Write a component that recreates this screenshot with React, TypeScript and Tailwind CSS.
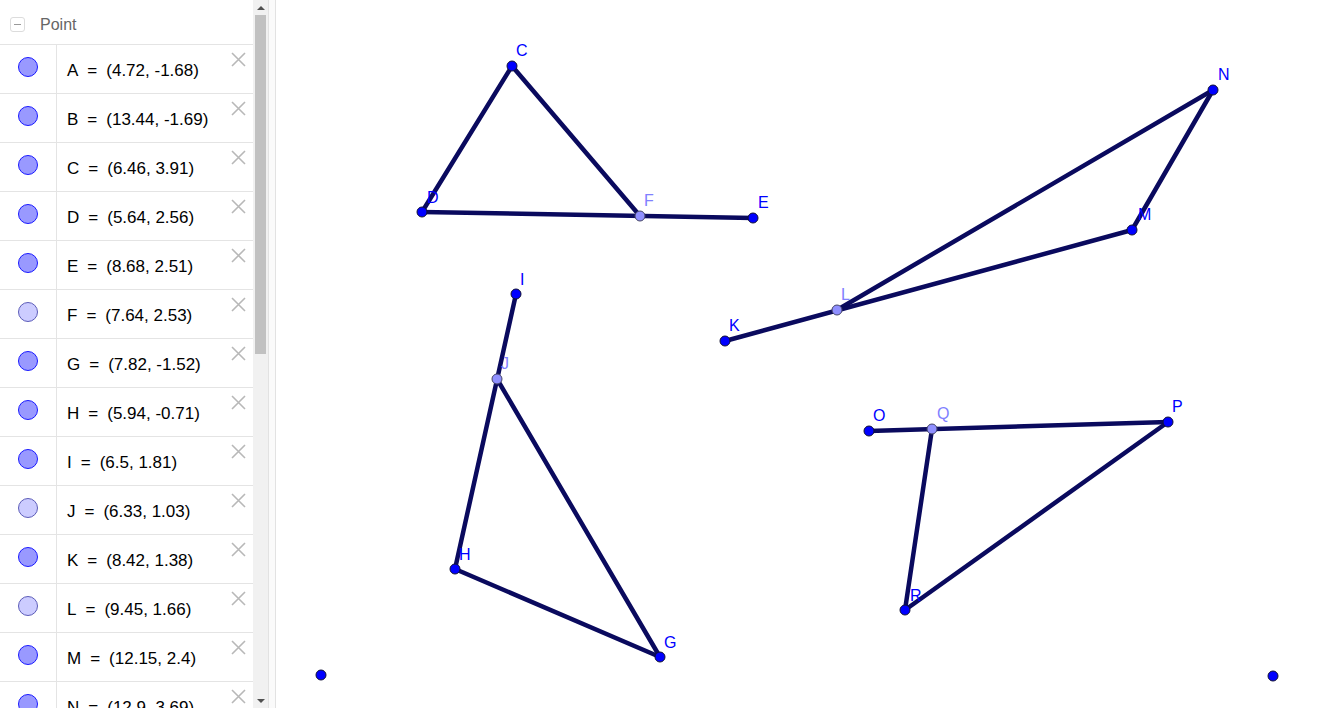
import React from "react";

interface PointRow {
  name: string;
  value: string;
  dependent?: boolean;
}

const rows: PointRow[] = [
  { name: "A", value: "(4.72, -1.68)" },
  { name: "B", value: "(13.44, -1.69)" },
  { name: "C", value: "(6.46, 3.91)" },
  { name: "D", value: "(5.64, 2.56)" },
  { name: "E", value: "(8.68, 2.51)" },
  { name: "F", value: "(7.64, 2.53)", dependent: true },
  { name: "G", value: "(7.82, -1.52)" },
  { name: "H", value: "(5.94, -0.71)" },
  { name: "I", value: "(6.5, 1.81)" },
  { name: "J", value: "(6.33, 1.03)", dependent: true },
  { name: "K", value: "(8.42, 1.38)" },
  { name: "L", value: "(9.45, 1.66)", dependent: true },
  { name: "M", value: "(12.15, 2.4)" },
  { name: "N", value: "(12.9, 3.69)" },
];

// canvas points, page coordinates
const pts: Record<string, { x: number; y: number; lx: number; ly: number; dep?: boolean; label?: boolean }> = {
  A: { x: 321, y: 675, lx: 0, ly: 0, label: false },
  B: { x: 1273, y: 676, lx: 0, ly: 0, label: false },
  C: { x: 512, y: 66, lx: 516, ly: 56 },
  D: { x: 422, y: 212, lx: 427, ly: 203 },
  E: { x: 753, y: 218, lx: 758, ly: 208 },
  F: { x: 640, y: 216, lx: 644, ly: 206, dep: true },
  G: { x: 660, y: 657, lx: 664, ly: 648 },
  H: { x: 455, y: 569, lx: 459, ly: 560 },
  I: { x: 516, y: 294, lx: 520, ly: 285 },
  J: { x: 497, y: 379, lx: 501, ly: 369, dep: true },
  K: { x: 725, y: 341, lx: 729, ly: 331 },
  L: { x: 837, y: 310, lx: 841, ly: 300, dep: true },
  M: { x: 1132, y: 230, lx: 1138, ly: 220 },
  N: { x: 1213, y: 90, lx: 1218, ly: 80 },
  O: { x: 869, y: 431, lx: 873, ly: 421 },
  P: { x: 1168, y: 422, lx: 1172, ly: 412 },
  Q: { x: 932, y: 429, lx: 937, ly: 419, dep: true },
  R: { x: 905, y: 610, lx: 910, ly: 601 },
};

const segments: [string, string][] = [
  ["C", "D"], ["C", "F"], ["D", "E"],
  ["N", "M"], ["N", "L"], ["K", "M"],
  ["I", "H"], ["J", "G"], ["H", "G"],
  ["O", "P"], ["Q", "R"], ["R", "P"],
];

function Row({ row }: { row: PointRow }): React.ReactElement {
  return (
    <div className="flex h-[49px] border-b border-[#e4e4e4]">
      <div className="w-[57px] border-r border-[#e4e4e4] flex justify-center">
        <div
          className={
            row.dependent
              ? "mt-[12px] w-[20px] h-[20px] rounded-full bg-[#ccccff] border border-[#5c5cb8]"
              : "mt-[12px] w-[20px] h-[20px] rounded-full bg-[#9999ff] border border-[#1a1aff]"
          }
        />
      </div>
      <div className="relative flex-1 pl-[10px] pt-[15px] text-[17px] leading-[22px] text-black whitespace-nowrap">
        {row.name}
        <span className="mx-[9px]">=</span>
        {row.value}
        <svg className="absolute right-[7px] top-[7px]" width="15" height="15" viewBox="0 0 15 15">
          <path d="M1 1 L14 14 M14 1 L1 14" stroke="#b8b8b8" strokeWidth="1.6" fill="none" />
        </svg>
      </div>
    </div>
  );
}

export default function App(): React.ReactElement {
  return (
    <div className="flex h-[708px] w-full overflow-hidden bg-white" style={{ fontFamily: '"Liberation Sans", Arial, sans-serif' }}>
      {/* Algebra view */}
      <div className="w-[253px] shrink-0 overflow-hidden">
        <div className="flex items-center h-[45px] border-b border-[#e4e4e4] pl-[10px] pt-[5px] gap-[15px]">
          <div className="w-[15px] h-[15px] rounded-[3px] border border-[#dcdcdc] flex items-center justify-center">
            <div className="w-[7px] h-[1.5px] bg-[#9a9a9a]" />
          </div>
          <span className="text-[16px] text-[#666666]">Point</span>
        </div>
        {rows.map(r => (
          <Row key={r.name} row={r} />
        ))}
      </div>

      {/* Scrollbar */}
      <div className="w-[15px] shrink-0 bg-[#f1f1f1] flex flex-col items-center">
        <div className="h-[15px] flex items-center justify-center">
          <div className="w-0 h-0 border-l-[4px] border-r-[4px] border-b-[4px] border-l-transparent border-r-transparent border-b-[#505050]" />
        </div>
        <div className="w-[11px] h-[339px] bg-[#c1c1c1]" />
        <div className="flex-1" />
        <div className="h-[15px] flex items-center justify-center">
          <div className="w-0 h-0 border-l-[4px] border-r-[4px] border-t-[4px] border-l-transparent border-r-transparent border-t-[#505050]" />
        </div>
      </div>

      {/* Splitter */}
      <div className="w-[8px] shrink-0 bg-[#fafafa] border-l border-r border-[#e2e2e2]" />

      {/* Graphics view */}
      <div className="flex-1 relative">
        <svg className="block w-full h-full" viewBox="276 0 1068 708" preserveAspectRatio="xMinYMin slice">
          {segments.map(([a, b]) => (
            <line
              key={a + b}
              x1={pts[a].x}
              y1={pts[a].y}
              x2={pts[b].x}
              y2={pts[b].y}
              stroke="#0a0a5e"
              strokeWidth="4.5"
              strokeLinecap="round"
            />
          ))}
          {Object.entries(pts).map(([k, p]) => (
            <circle
              key={k}
              cx={p.x}
              cy={p.y}
              r="5"
              fill={p.dep ? "#8f8fff" : "#0000ff"}
              stroke={p.dep ? "#444466" : "#111133"}
              strokeWidth="1"
            />
          ))}
          {Object.entries(pts)
            .filter(([, p]) => p.label !== false)
            .map(([k, p]) => (
              <text
                key={k + "l"}
                x={p.lx}
                y={p.ly}
                fontSize="16"
                fill={p.dep ? "#8080ff" : "#0000ff"}
                fontFamily='"Liberation Sans", Arial, sans-serif'
              >
                {k}
              </text>
            ))}
        </svg>
      </div>
    </div>
  );
}
